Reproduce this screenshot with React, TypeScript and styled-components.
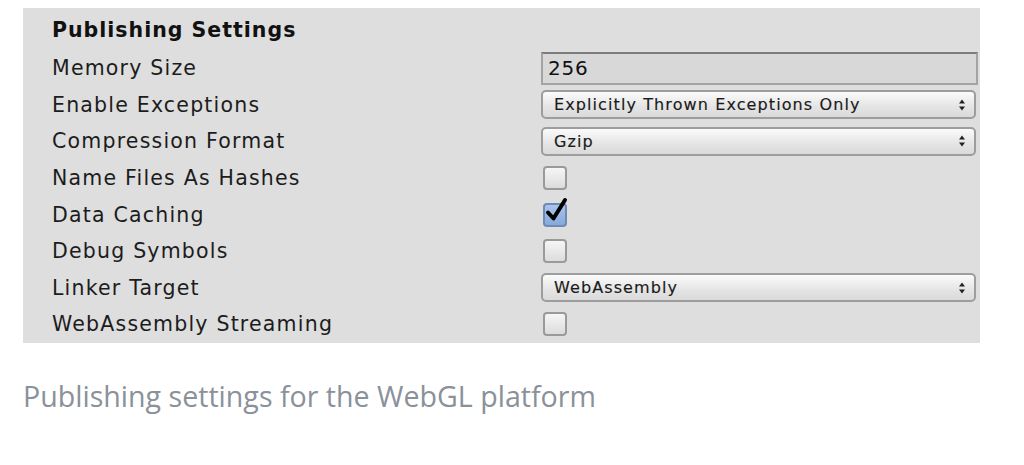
import * as React from "react";
import styled, { createGlobalStyle } from "styled-components";

const GlobalStyle = createGlobalStyle`
  html, body {
    margin: 0;
    padding: 0;
    background: #ffffff;
  }
`;

type Setting =
  | { label: string; kind: "text"; value: string }
  | { label: string; kind: "select"; value: string }
  | { label: string; kind: "check"; checked: boolean };

const settings: Setting[] = [
  { label: "Memory Size", kind: "text", value: "256" },
  { label: "Enable Exceptions", kind: "select", value: "Explicitly Thrown Exceptions Only" },
  { label: "Compression Format", kind: "select", value: "Gzip" },
  { label: "Name Files As Hashes", kind: "check", checked: false },
  { label: "Data Caching", kind: "check", checked: true },
  { label: "Debug Symbols", kind: "check", checked: false },
  { label: "Linker Target", kind: "select", value: "WebAssembly" },
  { label: "WebAssembly Streaming", kind: "check", checked: false },
];

const ArrowsIcon = () => (
  <svg width="8" height="12" viewBox="0 0 8 12">
    <path d="M4 0.5 L7 4.5 H1 Z" fill="#222" />
    <path d="M4 11.5 L7 7.5 H1 Z" fill="#222" />
  </svg>
);

const CheckMark = () => (
  <svg width="26" height="28" viewBox="0 0 26 28">
    <path
      d="M4 15.5 L9.5 21.5 L21 3"
      fill="none"
      stroke="#000"
      strokeWidth="4"
      strokeLinecap="round"
      strokeLinejoin="round"
    />
  </svg>
);

const Control = ({ item }: { item: Setting }) => {
  if (item.kind === "text") {
    return <TextField>{item.value}</TextField>;
  }
  if (item.kind === "select") {
    return (
      <Select>
        <span>{item.value}</span>
        <ArrowsIcon />
      </Select>
    );
  }
  return (
    <Checkbox $checked={item.checked}>
      {item.checked && (
        <CheckSlot>
          <CheckMark />
        </CheckSlot>
      )}
    </Checkbox>
  );
};

const App = () => (
  <Page>
    <GlobalStyle />
    <Panel>
      <Heading>Publishing Settings</Heading>
      {settings.map((item) => (
        <Row key={item.label}>
          <Label>{item.label}</Label>
          <Control item={item} />
        </Row>
      ))}
    </Panel>
    <Caption>Publishing settings for the WebGL platform</Caption>
  </Page>
);

const Page = styled.div`
  width: 1024px;
  height: 465px;
  padding: 8px 0 0 23px;
  box-sizing: border-box;
`;

const Panel = styled.div`
  width: 957px;
  height: 335px;
  box-sizing: border-box;
  background: #dedede;
  display: flex;
  flex-direction: column;
  padding-top: 2px;
  padding-left: 29px;
  padding-right: 2px;
`;

const Heading = styled.div`
  height: 40px;
  display: flex;
  align-items: center;
  font-family: "DejaVu Sans", Verdana, sans-serif;
  font-weight: bold;
  font-size: 20.5px;
  letter-spacing: 1px;
  color: #111;
`;

const Row = styled.div`
  height: 36.6px;
  display: grid;
  grid-template-columns: 489px 1fr;
  align-items: center;
`;

const Label = styled.div`
  font-family: "DejaVu Sans", Verdana, sans-serif;
  font-size: 20.5px;
  letter-spacing: 1.2px;
  color: #1c1c1c;
  white-space: nowrap;
`;

const TextField = styled.div`
  height: 33px;
  box-sizing: border-box;
  border: 2px solid #a4a4a4;
  border-top-color: #7c7c7c;
  background: #d8d8d8;
  padding: 0 5px;
  display: flex;
  align-items: center;
  font-family: "DejaVu Sans", Verdana, sans-serif;
  font-size: 20px;
  letter-spacing: 0.8px;
  color: #111;
`;

const Select = styled.div`
  height: 29px;
  margin-right: 2px;
  box-sizing: border-box;
  border: 2px solid #9d9d9d;
  border-radius: 5px;
  background: linear-gradient(#fbfbfb, #e4e4e4 60%, #dadada);
  padding: 0 8px 0 11px;
  display: flex;
  align-items: center;
  justify-content: space-between;
  font-family: "DejaVu Sans", Verdana, sans-serif;
  font-size: 16px;
  letter-spacing: 1.1px;
  color: #1a1a1a;
  -webkit-text-stroke: 0.15px #1a1a1a;
`;

const Checkbox = styled.div<{ $checked: boolean }>`
  position: relative;
  width: 24px;
  height: 24px;
  margin-left: 2px;
  box-sizing: border-box;
  border: 2px solid ${(p) => (p.$checked ? "#6f8ab5" : "#9a9a9a")};
  border-radius: 4px;
  background: ${(p) =>
    p.$checked
      ? "linear-gradient(#a9c4ec, #86a9dc)"
      : "linear-gradient(#f6f6f6, #dcdcdc)"};
`;

const CheckSlot = styled.div`
  position: absolute;
  left: -1px;
  top: -8px;
  display: flex;
`;

const Caption = styled.div`
  margin-top: 33px;
  font-family: "Open Sans", sans-serif;
  font-size: 28.6px;
  color: #8a9199;
  letter-spacing: 0;
`;

export default App;
